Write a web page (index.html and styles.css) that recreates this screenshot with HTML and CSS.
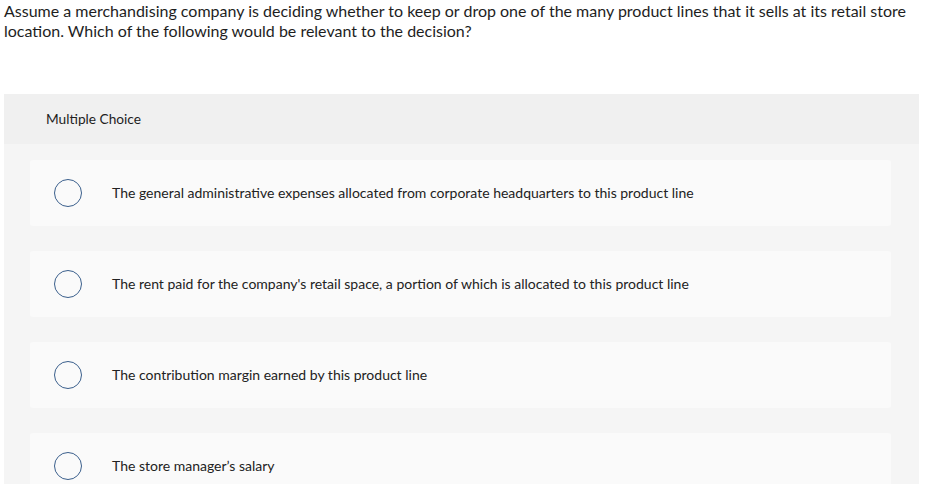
FILE: index.html
```html
<!DOCTYPE html>
<html>
<head>
<meta charset="utf-8">
<link rel="stylesheet" href="styles.css">
</head>
<body>
<p class="question">Assume a merchandising company is deciding whether to keep or drop one of the many product lines that it sells at its retail store location. Which of the following would be relevant to the decision?</p>
<div class="panel">
  <div class="panel-header">Multiple Choice</div>
  <div class="panel-body">
    <div class="option"><span class="radio"></span><span class="label">The general administrative expenses allocated from corporate headquarters to this product line</span></div>
    <div class="option"><span class="radio"></span><span class="label">The rent paid for the company's retail space, a portion of which is allocated to this product line</span></div>
    <div class="option"><span class="radio"></span><span class="label">The contribution margin earned by this product line</span></div>
    <div class="option"><span class="radio"></span><span class="label">The store manager’s salary</span></div>
  </div>
</div>
</body>
</html>
```
FILE: styles.css
```css
html, body {
  margin: 0;
  padding: 0;
  background: #ffffff;
}
body {
  font-family: Lato, "Open Sans", sans-serif;
  color: #222222;
  width: 935px;
  height: 501px;
  overflow: hidden;
}
.question {
  margin: 1px 0 0 0;
  padding: 0 4px;
  font-size: 16px;
  line-height: 20px;
  color: #1e1e1e;
}
.panel {
  margin: 53px 16px 0 4px;
  width: 915px;
}
.panel-header {
  height: 50px;
  background: #f0f0f0;
  display: flex;
  align-items: center;
  padding-left: 42px;
  padding-bottom: 2px;
  box-sizing: border-box;
  font-size: 13.7px;
  color: #1e1e1e;
}
.panel-body {
  background: #f5f5f5;
  height: 340px;
  box-sizing: border-box;
  padding: 16px 28px 0 26px;
  overflow: hidden;
}
.option {
  height: 66px;
  margin-bottom: 25px;
  background: #fafafa;
  border-radius: 3px;
  display: flex;
  align-items: center;
  padding-left: 24px;
}
.radio {
  width: 26px;
  height: 26px;
  border: 1.5px solid #3a5f8c;
  border-radius: 50%;
  flex: none;
  box-sizing: content-box;
}
.label {
  margin-left: 30px;
  margin-bottom: 2px;
  font-size: 14px;
  color: #222222;
}
```
